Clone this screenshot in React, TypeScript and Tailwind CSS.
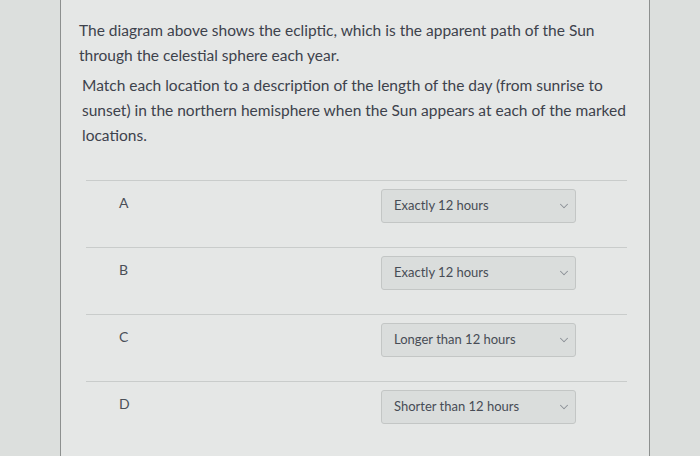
import React from "react";
import { ChevronDown } from "lucide-react";

const rows = [
  { label: "A", value: "Exactly 12 hours" },
  { label: "B", value: "Exactly 12 hours" },
  { label: "C", value: "Longer than 12 hours" },
  { label: "D", value: "Shorter than 12 hours" },
];

export default function App() {
  return (
    <div
      className="w-[700px] h-[456px] overflow-hidden bg-[#dcdfdd] flex"
      style={{ fontFamily: "Lato, 'Open Sans', sans-serif" }}
    >
      <div className="ml-[60px] w-[590px] h-full bg-[#e5e7e6] border-l border-r border-[#8d908f] pt-[18px] pl-[18px] pr-[10px]">
        <p className="text-[15.5px] leading-[25px] text-[#3d424c]">
          The diagram above shows the ecliptic, which is the apparent path of the Sun
          <br />
          through the celestial sphere each year.
        </p>
        <p className="mt-[5px] text-[15.5px] leading-[25px] text-[#3d424c] pl-[3px]">
          Match each location to a description of the length of the day (from sunrise to
          <br />
          sunset) in the northern hemisphere when the Sun appears at each of the marked
          <br />
          locations.
        </p>

        <div className="mt-[32px] ml-[7px] mr-[12px]">
          {rows.map((row) => (
            <div
              key={row.label}
              className="h-[67px] border-t border-[#c9cccb] flex items-start"
            >
              <div className="w-[295px] pl-[33px] pt-[11px] text-[14px] text-[#4a4f57]">
                {row.label}
              </div>
              <div className="mt-[8px] w-[195px] h-[34px] bg-[#dadddc] border border-[#c3c6c5] rounded-[3px] flex items-center justify-between pl-[12px] pr-[4px]">
                <span className="text-[13px] text-[#474c55]">{row.value}</span>
                <ChevronDown size={14} strokeWidth={1.75} className="text-[#8a8f96]" />
              </div>
            </div>
          ))}
        </div>
      </div>
    </div>
  );
}
